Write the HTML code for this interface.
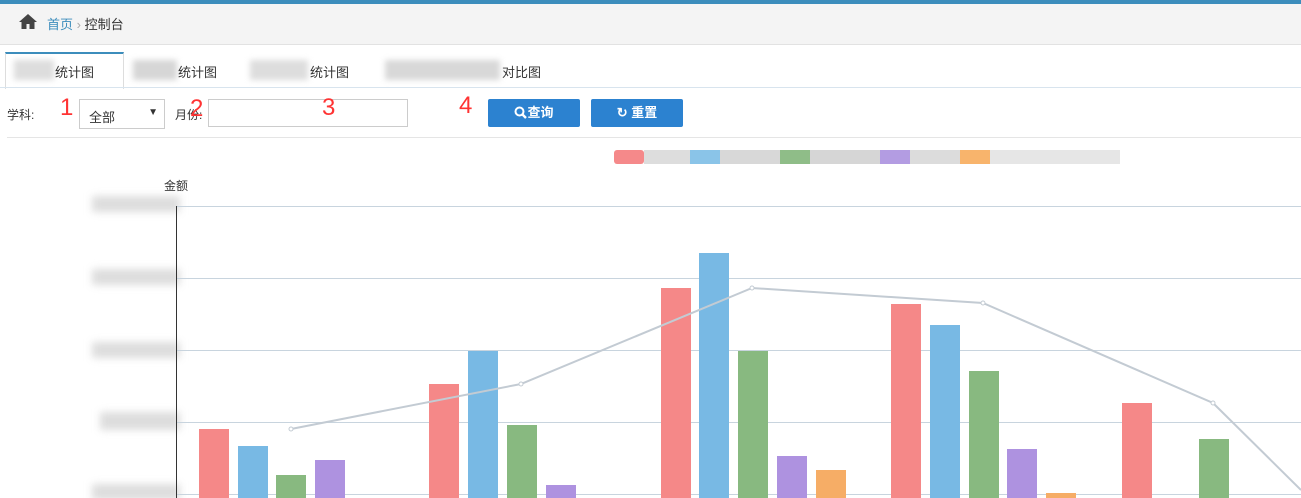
<!DOCTYPE html><html><head><meta charset="utf-8"><style>
body{margin:0;width:1301px;height:498px;overflow:hidden;background:#fff;font-family:"Liberation Sans","Noto Sans CJK SC",sans-serif;position:relative}
.a{position:absolute}
</style></head><body>
<div class="a" style="left:0;top:0;width:1301px;height:4px;background:#3c8dbc"></div>
<div class="a" style="left:0;top:4px;width:1301px;height:40px;background:#f4f4f4;border-bottom:1px solid #e2e2e2"></div>
<svg class="a" style="left:19px;top:14px" width="18" height="15" viewBox="0 0 18 15"><path d="M9 0L0 8h2.5v7h5v-5h3v5h5V8H18z" fill="#444"/></svg>
<div class="a" style="left:47px;top:14px;font-size:13px;color:#3c8dbc">首页 <span style="color:#aaa">›</span> <span style="color:#333">控制台</span></div>
<div class="a" style="left:5px;top:52px;width:117px;height:35px;border:1px solid #ddd;border-top:2px solid #3c8dbc;border-bottom:none;background:#fff"></div>
<div class="a" style="left:0;top:87px;width:1301px;height:1px;background:#d8e4ee"></div>
<div class="a" style="left:14px;top:60px;width:40px;height:20px;background:#ddd;filter:blur(3px)"></div>
<div class="a" style="left:55px;top:62px;font-size:13px;color:#333">统计图</div>
<div class="a" style="left:133px;top:60px;width:44px;height:20px;background:#d6d6d6;filter:blur(3px)"></div>
<div class="a" style="left:178px;top:62px;font-size:13px;color:#333">统计图</div>
<div class="a" style="left:250px;top:60px;width:58px;height:20px;background:#ddd;filter:blur(3px)"></div>
<div class="a" style="left:310px;top:62px;font-size:13px;color:#333">统计图</div>
<div class="a" style="left:385px;top:60px;width:115px;height:20px;background:#d8d8d8;filter:blur(3px)"></div>
<div class="a" style="left:502px;top:62px;font-size:13px;color:#333">对比图</div>
<div class="a" style="left:7px;top:106px;font-size:12px;color:#333">学科:</div>
<div class="a" style="left:60px;top:94px;font-size:24px;color:#f33">1</div>
<div class="a" style="left:79px;top:99px;width:86px;height:30px;border:1px solid #ccc;box-sizing:border-box;font-size:13px;color:#333;padding:7px 0 0 9px">全部<span style="position:absolute;right:6px;top:7px;font-size:10px">▼</span></div>
<div class="a" style="left:175px;top:106px;font-size:12px;color:#333">月份:</div>
<div class="a" style="left:208px;top:99px;width:200px;height:28px;border:1px solid #ccc;box-sizing:border-box"></div>
<div class="a" style="left:190px;top:95px;font-size:24px;color:#f33">2</div>
<div class="a" style="left:322px;top:94px;font-size:24px;color:#f33">3</div>
<div class="a" style="left:459px;top:92px;font-size:24px;color:#f33">4</div>
<div class="a" style="left:488px;top:99px;width:92px;height:28px;background:#2c82d0;border-radius:2px;color:#fff;font-size:13px;font-weight:bold;text-align:center;line-height:28px"><svg width="13" height="13" viewBox="0 0 13 13" style="vertical-align:-2px"><circle cx="5.5" cy="5.5" r="4" fill="none" stroke="#fff" stroke-width="2"/><path d="M8.5 8.5L12 12" stroke="#fff" stroke-width="2.4"/></svg>查询</div>
<div class="a" style="left:591px;top:99px;width:92px;height:28px;background:#2c82d0;border-radius:2px;color:#fff;font-size:13px;font-weight:bold;text-align:center;line-height:28px">↻ 重置</div>
<div class="a" style="left:7px;top:137px;width:1294px;height:1px;background:#e5e5e5"></div>
<div class="a" style="left:614px;top:150px;width:30px;height:14px;background:#f5898a;border-radius:3px"></div>
<div class="a" style="left:644px;top:150px;width:46px;height:14px;background:#ddd"></div>
<div class="a" style="left:690px;top:150px;width:30px;height:14px;background:#8ac4e8"></div>
<div class="a" style="left:720px;top:150px;width:60px;height:14px;background:#d8d8d8"></div>
<div class="a" style="left:780px;top:150px;width:30px;height:14px;background:#8fbd88"></div>
<div class="a" style="left:810px;top:150px;width:70px;height:14px;background:#d6d6d6"></div>
<div class="a" style="left:880px;top:150px;width:30px;height:14px;background:#b39ce2"></div>
<div class="a" style="left:910px;top:150px;width:50px;height:14px;background:#dcdcdc"></div>
<div class="a" style="left:960px;top:150px;width:30px;height:14px;background:#f8b46c"></div>
<div class="a" style="left:990px;top:150px;width:130px;height:14px;background:#e6e6e6"></div>
<div class="a" style="left:164px;top:177px;font-size:12px;color:#333">金额</div>
<svg class="a" style="left:0;top:0" width="1301" height="498">
<g fill="#ddd" style="filter:blur(4px)"><rect x="92" y="196" width="88" height="16"/><rect x="92" y="269" width="88" height="16"/><rect x="92" y="342" width="88" height="16"/><rect x="100" y="412" width="80" height="18"/><rect x="92" y="484" width="88" height="16"/></g>
<g stroke="#c8d4de" stroke-width="1"><line x1="176" y1="206.5" x2="1301" y2="206.5"/><line x1="176" y1="278.5" x2="1301" y2="278.5"/><line x1="176" y1="350.5" x2="1301" y2="350.5"/><line x1="176" y1="422.5" x2="1301" y2="422.5"/><line x1="176" y1="494.5" x2="1301" y2="494.5"/></g>
<line x1="176.5" y1="206" x2="176.5" y2="498" stroke="#333"/>
<g>
<rect x="199" y="429" width="30" height="70" fill="#f58888"/><rect x="238" y="446" width="30" height="60" fill="#78b9e4"/><rect x="276" y="475" width="30" height="30" fill="#88b980"/><rect x="315" y="460" width="30" height="40" fill="#ae92e0"/>
<rect x="429" y="384" width="30" height="120" fill="#f58888"/><rect x="468" y="351" width="30" height="150" fill="#78b9e4"/><rect x="507" y="425" width="30" height="80" fill="#88b980"/><rect x="546" y="485" width="30" height="20" fill="#ae92e0"/>
<rect x="661" y="288" width="30" height="220" fill="#f58888"/><rect x="699" y="253" width="30" height="250" fill="#78b9e4"/><rect x="738" y="351" width="30" height="150" fill="#88b980"/><rect x="777" y="456" width="30" height="50" fill="#ae92e0"/><rect x="816" y="470" width="30" height="30" fill="#f6ad66"/>
<rect x="891" y="304" width="30" height="200" fill="#f58888"/><rect x="930" y="325" width="30" height="180" fill="#78b9e4"/><rect x="969" y="371" width="30" height="130" fill="#88b980"/><rect x="1007" y="449" width="30" height="50" fill="#ae92e0"/><rect x="1046" y="493" width="30" height="10" fill="#f6ad66"/>
<rect x="1122" y="403" width="30" height="100" fill="#f58888"/><rect x="1199" y="439" width="30" height="60" fill="#88b980"/>
</g>
<polyline points="291,429 521,384 752,288 983,303 1213,403 1301,490" fill="none" stroke="#c3cbd3" stroke-width="2"/>
<g fill="#fff" stroke="#c3cbd3"><circle cx="291" cy="429" r="2"/><circle cx="521" cy="384" r="2"/><circle cx="752" cy="288" r="2"/><circle cx="983" cy="303" r="2"/><circle cx="1213" cy="403" r="2"/></g>
</svg>
</body></html>
